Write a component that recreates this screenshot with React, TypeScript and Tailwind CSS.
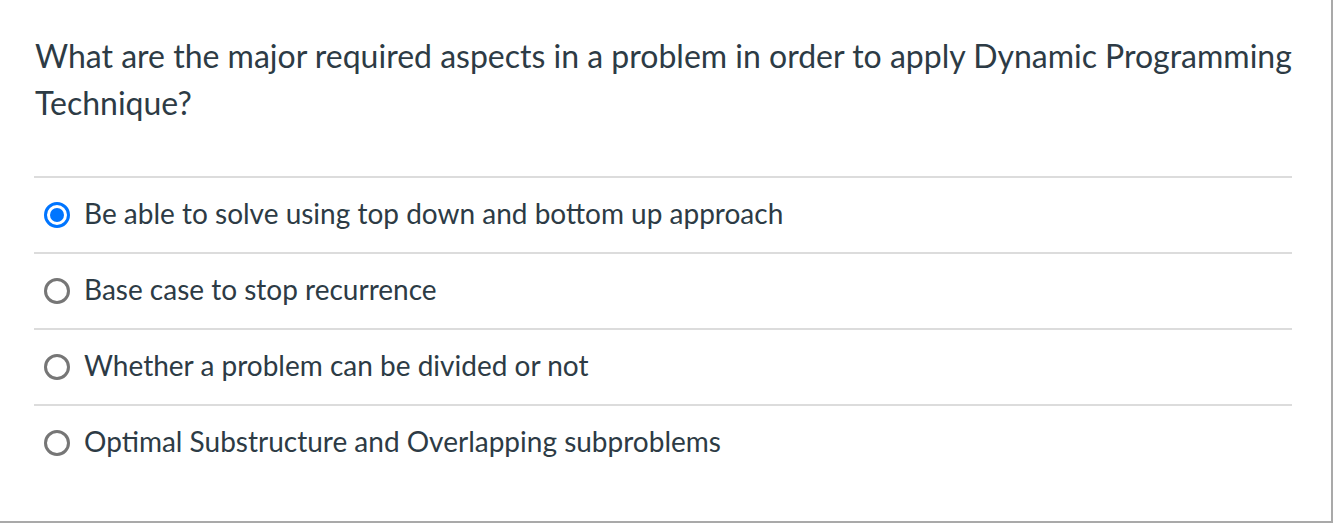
const answers = [
  { id: "a1", text: "Be able to solve using top down and bottom up approach", checked: true },
  { id: "a2", text: "Base case to stop recurrence", checked: false },
  { id: "a3", text: "Whether a problem can be divided or not", checked: false },
  { id: "a4", text: "Optimal Substructure and Overlapping subproblems", checked: false },
];

const Radio = ({ checked }: { checked: boolean }) =>
  checked ? (
    <span className="flex h-[26px] w-[26px] shrink-0 items-center justify-center rounded-full border-[3px] border-[#0075ff]">
      <span className="h-[14px] w-[14px] rounded-full bg-[#0075ff]" />
    </span>
  ) : (
    <span className="h-[26px] w-[26px] shrink-0 rounded-full border-[3px] border-[#767676]" />
  );

export default function App() {
  return (
    <div className="h-[531px] w-[1333px] bg-white font-['Lato',sans-serif] text-[#2d3b45]">
      <div className="h-[523px] w-[1333px] border-r-2 border-b-2 border-[#a9a9a9]">
        {/* Question */}
        <div className="px-[35px] pt-[32px] text-[32px] leading-[47px]">
          What are the major required aspects in a problem in order to apply Dynamic Programming
          Technique?
        </div>

        {/* Answers */}
        <div className="ml-[34px] mt-[50px] w-[1258px]">
          {answers.map((a) => (
            <div
              key={a.id}
              className="flex h-[76px] items-center gap-[14px] border-t-2 border-[#dcdcdc] pl-[10px] text-[28px]"
            >
              <Radio checked={a.checked} />
              <span className="pb-[5px]">{a.text}</span>
            </div>
          ))}
        </div>
      </div>
    </div>
  );
}
